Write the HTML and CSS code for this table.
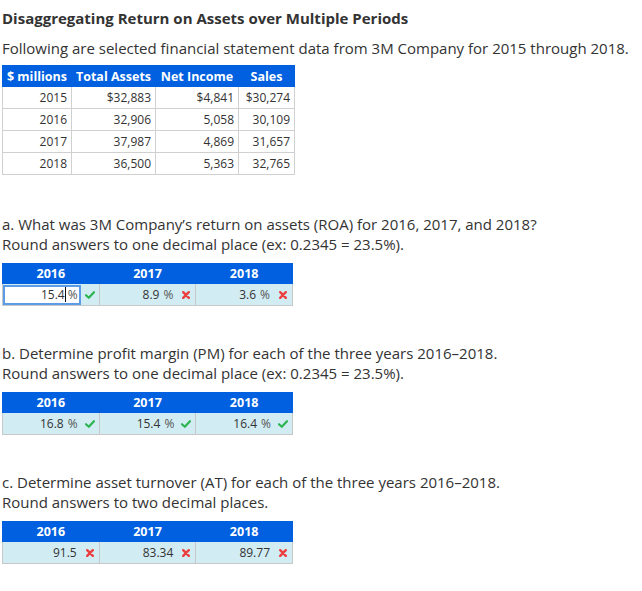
FILE: index.html
```html
<!DOCTYPE html>
<html>
<head>
<meta charset="utf-8">
<link rel="stylesheet" href="styles.css">
</head>
<body>
<div class="page">
  <h1 class="title">Disaggregating Return on Assets over Multiple Periods</h1>
  <p class="intro">Following are selected financial statement data from 3M Company for 2015 through 2018.</p>
  <table class="data">
    <thead>
      <tr><th class="c1">$ millions</th><th class="c2">Total Assets</th><th class="c3">Net Income</th><th class="c4">Sales</th></tr>
    </thead>
    <tbody>
      <tr><td>2015</td><td>$32,883</td><td>$4,841</td><td>$30,274</td></tr>
      <tr><td>2016</td><td>32,906</td><td>5,058</td><td>30,109</td></tr>
      <tr><td>2017</td><td>37,987</td><td>4,869</td><td>31,657</td></tr>
      <tr><td>2018</td><td>36,500</td><td>5,363</td><td>32,765</td></tr>
    </tbody>
  </table>

  <section class="question">
    <p class="qtext">a. What was 3M Company’s return on assets (ROA) for 2016, 2017, and 2018?<br>Round answers to one decimal place (ex: 0.2345 = 23.5%).</p>
    <table class="ans">
      <thead><tr><th>2016</th><th>2017</th><th>2018</th></tr></thead>
      <tbody>
        <tr>
          <td><div class="cell"><span class="input"><span class="val">15.4</span><span class="caret"></span><span class="pct">%</span></span><svg class="ok near" viewBox="0 0 10 8"><path d="M1 4.2 L3.8 6.8 L9 1.2" /></svg></div></td>
          <td><div class="cell"><span class="val">8.9</span><span class="pct">%</span><svg class="bad" viewBox="0 0 8 8"><path d="M1.2 1.2 L6.8 6.8 M6.8 1.2 L1.2 6.8" /></svg></div></td>
          <td><div class="cell"><span class="val">3.6</span><span class="pct">%</span><svg class="bad" viewBox="0 0 8 8"><path d="M1.2 1.2 L6.8 6.8 M6.8 1.2 L1.2 6.8" /></svg></div></td>
        </tr>
      </tbody>
    </table>
  </section>

  <section class="question">
    <p class="qtext">b. Determine profit margin (PM) for each of the three years 2016–2018.<br>Round answers to one decimal place (ex: 0.2345 = 23.5%).</p>
    <table class="ans">
      <thead><tr><th>2016</th><th>2017</th><th>2018</th></tr></thead>
      <tbody>
        <tr>
          <td><div class="cell"><span class="val">16.8</span><span class="pct">%</span><svg class="ok" viewBox="0 0 10 8"><path d="M1 4.2 L3.8 6.8 L9 1.2" /></svg></div></td>
          <td><div class="cell"><span class="val">15.4</span><span class="pct">%</span><svg class="ok" viewBox="0 0 10 8"><path d="M1 4.2 L3.8 6.8 L9 1.2" /></svg></div></td>
          <td><div class="cell"><span class="val">16.4</span><span class="pct">%</span><svg class="ok" viewBox="0 0 10 8"><path d="M1 4.2 L3.8 6.8 L9 1.2" /></svg></div></td>
        </tr>
      </tbody>
    </table>
  </section>

  <section class="question">
    <p class="qtext">c. Determine asset turnover (AT) for each of the three years 2016–2018.<br>Round answers to two decimal places.</p>
    <table class="ans">
      <thead><tr><th>2016</th><th>2017</th><th>2018</th></tr></thead>
      <tbody>
        <tr>
          <td><div class="cell"><span class="val">91.5</span><svg class="bad" viewBox="0 0 8 8"><path d="M1.2 1.2 L6.8 6.8 M6.8 1.2 L1.2 6.8" /></svg></div></td>
          <td><div class="cell"><span class="val">83.34</span><svg class="bad" viewBox="0 0 8 8"><path d="M1.2 1.2 L6.8 6.8 M6.8 1.2 L1.2 6.8" /></svg></div></td>
          <td><div class="cell"><span class="val">89.77</span><svg class="bad" viewBox="0 0 8 8"><path d="M1.2 1.2 L6.8 6.8 M6.8 1.2 L1.2 6.8" /></svg></div></td>
        </tr>
      </tbody>
    </table>
  </section>
</div>
</body>
</html>
```

FILE: styles.css
```css
html, body {
  margin: 0;
  padding: 0;
  background: #ffffff;
}
body {
  font-family: "Open Sans", "DejaVu Sans", sans-serif;
  color: #333333;
}
.page {
  padding: 8px 0 0 2px;
}
.title {
  margin: 0;
  font-size: 15px;
  font-weight: 700;
  line-height: 20px;
  color: #333333;
}
.intro {
  margin: 10px 0 7px 0;
  font-size: 15px;
  line-height: 20px;
}
table {
  border-collapse: collapse;
  font-size: 12px;
}
.data {
  table-layout: fixed;
  width: 288px;
}
.data th {
  background: #0060df;
  color: #ffffff;
  font-weight: 700;
  font-size: 12.5px;
  height: 20px;
  padding: 0;
  text-align: center;
  white-space: nowrap;
  border: 1px solid #0060df;
}
.data td {
  height: 21px;
  padding: 0 4px;
  text-align: right;
  white-space: nowrap;
  border: 1px solid #d0d0d0;
  color: #333333;
}
.data .c1 { width: 68px; }
.data .c2 { width: 83px; }
.data .c3 { width: 82px; }
.data .c4 { width: 55px; }
.question {
  margin-top: 39px;
}
.question + .question {
  margin-top: 37px;
}
.qtext {
  margin: 0 0 9px 0;
  font-size: 15px;
  line-height: 20px;
}
.ans {
  width: 291px;
  table-layout: fixed;
}
.ans th {
  background: #0060df;
  color: #ffffff;
  font-weight: 700;
  font-size: 12.5px;
  height: 19px;
  padding: 0;
  text-align: center;
  border: 1px solid #0060df;
}
.ans td {
  background: #d2ecf3;
  border: 1px solid #c8c8c8;
  height: 21px;
  padding: 0;
}
.cell {
  display: flex;
  align-items: center;
  justify-content: flex-end;
  padding-right: 4px;
  height: 21px;
  color: #333333;
}
.val {
  font-size: 12px;
}
.pct {
  margin-left: 4px;
  color: #555555;
}
.input {
  flex: 1;
  display: flex;
  align-items: center;
  justify-content: flex-end;
  height: 16px;
  background: #ffffff;
  border: 2px solid #5b9be8;
  padding-right: 1px;
}
.caret {
  display: inline-block;
  width: 1px;
  height: 15px;
  background: #111111;
}
.input .pct {
  margin-left: 2px;
}
svg.ok, svg.bad {
  flex: none;
  margin-left: 7px;
}
svg.ok {
  width: 10px;
  height: 8px;
}
svg.ok.near {
  margin-left: 4px;
}
svg.ok path {
  fill: none;
  stroke: #2cb550;
  stroke-width: 2.2;
  stroke-linecap: round;
  stroke-linejoin: round;
}
svg.bad {
  width: 8px;
  height: 8px;
  margin-left: 9px;
  margin-right: 1px;
}
svg.bad path {
  fill: none;
  stroke: #ec3f3f;
  stroke-width: 2.4;
  stroke-linecap: round;
}
```
